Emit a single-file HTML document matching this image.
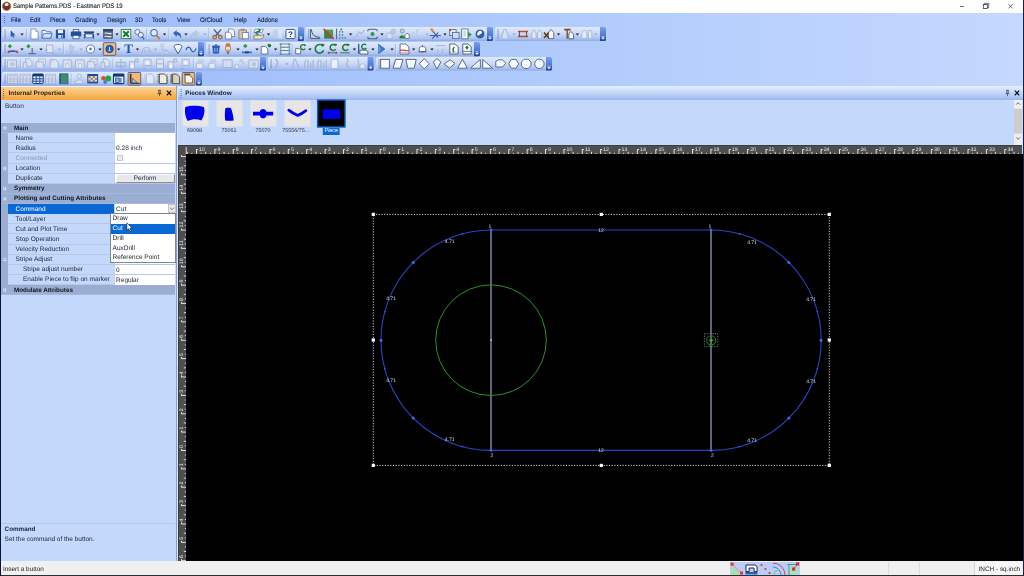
<!DOCTYPE html><html><head><meta charset="utf-8"><title>Sample Patterns.PDS - Eastman PDS 19</title><style>
*{margin:0;padding:0;box-sizing:border-box}
html,body{width:1024px;height:576px;overflow:hidden}
body{will-change:transform;-webkit-font-smoothing:antialiased;text-rendering:geometricPrecision}
body{position:relative;font-family:"Liberation Sans", sans-serif;font-size:6.5px;color:#1a1a2a;background:linear-gradient(90deg,#9dbbfa 0%,#a3c0fb 21%,#b2cdfc 60%,#c5d8fe 100%)}
.a{position:absolute}
.t{position:absolute;white-space:nowrap;line-height:10px;height:10px}
#title{left:0;top:0;width:1024px;height:13px;background:#fff}
#lb{left:0;top:0;width:1.3px;height:576px;background:#0b1338}
.menu span{position:absolute;top:15.9px;transform:scaleX(.93);transform-origin:0 0;font-size:6.6px;color:#1c2a4a;line-height:10px;-webkit-text-stroke:.15px #1c2a4a}
#lp{left:1px;top:86px;width:175px;height:475px;background:#c4d8fb}
#lph{left:1px;top:86px;width:174.5px;height:14px;background:linear-gradient(#fbd49a 0%,#f9bf6c 45%,#f6a440 100%);border-top:1px solid #e9eef9}
#pw{left:178px;top:86px;width:845px;height:60px;background:#c4d8fb}
#pwh{left:178px;top:86px;width:845px;height:13.5px;background:linear-gradient(#e6eefd 0%,#cddcfa 35%,#b0c8f5 75%,#9ab6ec 100%)}
.row{position:absolute;left:1px;width:174px;height:10.13px;border-bottom:.6px solid #b7c7e7}
.cat{background:#9aadd2;font-weight:bold;border-bottom:.6px solid #a6b8da}
.gut{position:absolute;left:0;top:-.3px;width:7.3px;height:10.8px;background:#9aadd2}
.lab{position:absolute;top:.55px;line-height:10px;font-size:6.5px;color:#20283c;white-space:nowrap}
.val{position:absolute;left:112.8px;top:0;width:61.2px;height:9.6px;background:#fff;line-height:11.1px;font-size:6.5px;padding-left:1.3px;color:#20283c;border-left:.6px solid #c8d2e6}
#status{left:1px;top:561px;width:1022px;height:14px;background:#f0f0f0}
#canvas{left:186px;top:154px;width:837px;height:407px;background:#000}
</style></head><body>
<div class="a" id="title"></div>
<svg class="a" style="left:2px;top:1px" width="10" height="11" viewBox="0 0 10 11"><circle cx="4.6" cy="5.2" r="4.3" fill="#6b3a28"/><circle cx="4.6" cy="5.2" r="4.3" fill="none" stroke="#b08a4a" stroke-width=".8"/><ellipse cx="4.6" cy="3.6" rx="2" ry="1.6" fill="#f3efe6"/><ellipse cx="4.6" cy="7" rx="1.8" ry="1.5" fill="#8a1f3c"/></svg>
<div class="t" style="left:13px;top:2.1px;font-size:6.55px;color:#222;-webkit-text-stroke:.12px #222;transform:scaleX(.915);transform-origin:0 0">Sample Patterns.PDS - Eastman PDS 19</div>
<svg class="a" style="left:950px;top:0" width="74" height="13" viewBox="0 0 74 13"><path d="M10 6.5h4" stroke="#333" stroke-width=".7"/><rect x="33.3" y="4.5" width="4" height="4" fill="none" stroke="#333" stroke-width=".8"/><path d="M34.6 4.500v-1.200h4.200v4.200h-1.400" fill="none" stroke="#333" stroke-width=".7"/><path d="M58.5 4.2l4.2 4.2m0-4.2l-4.2 4.2" stroke="#333" stroke-width=".7"/></svg>
<svg class="a" style="left:3px;top:15px" width="3" height="10" viewBox="0 0 3 10"><g fill="#4c64a0"><rect x="1" y="1" width="1" height="1"/><rect x="1" y="3" width="1" height="1"/><rect x="1" y="5" width="1" height="1"/><rect x="1" y="7" width="1" height="1"/></g></svg>
<div class="menu">
<span style="left:10.9px">File</span>
<span style="left:29.9px">Edit</span>
<span style="left:50.2px">Piece</span>
<span style="left:74.7px">Grading</span>
<span style="left:106.6px">Design</span>
<span style="left:135.4px">3D</span>
<span style="left:152.4px">Tools</span>
<span style="left:176.9px">View</span>
<span style="left:199.9px">O/Cloud</span>
<span style="left:233.9px">Help</span>
<span style="left:257.4px">Addons</span>
</div>
<svg class="a" style="left:0;top:26px" width="1024" height="60" viewBox="0 26 1024 60" font-family='"Liberation Sans", sans-serif'><defs><linearGradient id="tbg" x1="0" y1="0" x2="0" y2="1"><stop offset="0" stop-color="#e1eafc"/><stop offset=".45" stop-color="#cbdaf8"/><stop offset=".85" stop-color="#a9c0ee"/><stop offset="1" stop-color="#8ea8e0"/></linearGradient><linearGradient id="cap" x1="0" y1="0" x2="0" y2="1"><stop offset="0" stop-color="#7ba0ea"/><stop offset=".6" stop-color="#4c78d4"/><stop offset="1" stop-color="#1f3f94"/></linearGradient></defs><rect x="2" y="27" width="302" height="14" rx="1.500" fill="url(#tbg)"/><path d="M298 27h4.500a1.500 1.500 0 0 1 1.500 1.500v11a1.500 1.500 0 0 1-1.500 1.500h-4.500z" fill="url(#cap)"/><path d="M299.4 36.4h3M299.6 37.8h2.800l-1.400 1.500z" stroke="#f0f4fc" stroke-width=".6" fill="#f0f4fc"/><rect x="4.6" y="29.4" width="1" height="1" fill="#4c64a0"/><rect x="4.6" y="31.4" width="1" height="1" fill="#4c64a0"/><rect x="4.6" y="33.4" width="1" height="1" fill="#4c64a0"/><rect x="4.6" y="35.4" width="1" height="1" fill="#4c64a0"/><rect x="4.6" y="37.4" width="1" height="1" fill="#4c64a0"/><rect x="305.5" y="27" width="187.5" height="14" rx="1.500" fill="url(#tbg)"/><path d="M487 27h4.500a1.500 1.500 0 0 1 1.500 1.500v11a1.500 1.500 0 0 1-1.500 1.500h-4.500z" fill="url(#cap)"/><path d="M488.4 36.4h3M488.6 37.8h2.800l-1.400 1.500z" stroke="#f0f4fc" stroke-width=".6" fill="#f0f4fc"/><rect x="308.1" y="29.4" width="1" height="1" fill="#4c64a0"/><rect x="308.1" y="31.4" width="1" height="1" fill="#4c64a0"/><rect x="308.1" y="33.4" width="1" height="1" fill="#4c64a0"/><rect x="308.1" y="35.4" width="1" height="1" fill="#4c64a0"/><rect x="308.1" y="37.4" width="1" height="1" fill="#4c64a0"/><rect x="495" y="27" width="111" height="14" rx="1.500" fill="url(#tbg)"/><path d="M600 27h4.500a1.500 1.500 0 0 1 1.500 1.500v11a1.500 1.500 0 0 1-1.500 1.500h-4.500z" fill="url(#cap)"/><path d="M601.4 36.4h3M601.6 37.8h2.800l-1.400 1.500z" stroke="#f0f4fc" stroke-width=".6" fill="#f0f4fc"/><rect x="497.6" y="29.4" width="1" height="1" fill="#4c64a0"/><rect x="497.6" y="31.4" width="1" height="1" fill="#4c64a0"/><rect x="497.6" y="33.4" width="1" height="1" fill="#4c64a0"/><rect x="497.6" y="35.4" width="1" height="1" fill="#4c64a0"/><rect x="497.6" y="37.4" width="1" height="1" fill="#4c64a0"/><rect x="2" y="42" width="202" height="14.200000000000003" rx="1.500" fill="url(#tbg)"/><path d="M198 42h4.500a1.500 1.500 0 0 1 1.500 1.500v11.200000000000003a1.500 1.500 0 0 1-1.500 1.500h-4.500z" fill="url(#cap)"/><path d="M199.4 51.6h3M199.6 53.0h2.800l-1.400 1.500z" stroke="#f0f4fc" stroke-width=".6" fill="#f0f4fc"/><rect x="4.6" y="44.4" width="1" height="1" fill="#4c64a0"/><rect x="4.6" y="46.4" width="1" height="1" fill="#4c64a0"/><rect x="4.6" y="48.4" width="1" height="1" fill="#4c64a0"/><rect x="4.6" y="50.4" width="1" height="1" fill="#4c64a0"/><rect x="4.6" y="52.4" width="1" height="1" fill="#4c64a0"/><rect x="206" y="42" width="274" height="14.200000000000003" rx="1.500" fill="url(#tbg)"/><path d="M474 42h4.500a1.500 1.500 0 0 1 1.500 1.500v11.200000000000003a1.500 1.500 0 0 1-1.500 1.500h-4.500z" fill="url(#cap)"/><path d="M475.4 51.6h3M475.6 53.0h2.800l-1.400 1.500z" stroke="#f0f4fc" stroke-width=".6" fill="#f0f4fc"/><rect x="208.6" y="44.4" width="1" height="1" fill="#4c64a0"/><rect x="208.6" y="46.4" width="1" height="1" fill="#4c64a0"/><rect x="208.6" y="48.4" width="1" height="1" fill="#4c64a0"/><rect x="208.6" y="50.4" width="1" height="1" fill="#4c64a0"/><rect x="208.6" y="52.4" width="1" height="1" fill="#4c64a0"/><rect x="2" y="57" width="264" height="13.599999999999994" rx="1.500" fill="url(#tbg)"/><path d="M260 57h4.500a1.500 1.500 0 0 1 1.500 1.500v10.599999999999994a1.500 1.500 0 0 1-1.500 1.500h-4.500z" fill="url(#cap)"/><path d="M261.4 66.0h3M261.6 67.39999999999999h2.800l-1.400 1.500z" stroke="#f0f4fc" stroke-width=".6" fill="#f0f4fc"/><rect x="4.6" y="59.4" width="1" height="1" fill="#4c64a0"/><rect x="4.6" y="61.4" width="1" height="1" fill="#4c64a0"/><rect x="4.6" y="63.4" width="1" height="1" fill="#4c64a0"/><rect x="4.6" y="65.4" width="1" height="1" fill="#4c64a0"/><rect x="4.6" y="67.4" width="1" height="1" fill="#4c64a0"/><rect x="268" y="57" width="105.60000000000002" height="13.599999999999994" rx="1.500" fill="url(#tbg)"/><path d="M367.6 57h4.500a1.500 1.500 0 0 1 1.500 1.500v10.599999999999994a1.500 1.500 0 0 1-1.500 1.500h-4.500z" fill="url(#cap)"/><path d="M369.0 66.0h3M369.20000000000005 67.39999999999999h2.800l-1.400 1.500z" stroke="#f0f4fc" stroke-width=".6" fill="#f0f4fc"/><rect x="270.6" y="59.4" width="1" height="1" fill="#4c64a0"/><rect x="270.6" y="61.4" width="1" height="1" fill="#4c64a0"/><rect x="270.6" y="63.4" width="1" height="1" fill="#4c64a0"/><rect x="270.6" y="65.4" width="1" height="1" fill="#4c64a0"/><rect x="270.6" y="67.4" width="1" height="1" fill="#4c64a0"/><rect x="376" y="57" width="176" height="13.599999999999994" rx="1.500" fill="url(#tbg)"/><path d="M546 57h4.500a1.500 1.500 0 0 1 1.500 1.500v10.599999999999994a1.500 1.500 0 0 1-1.500 1.500h-4.500z" fill="url(#cap)"/><path d="M547.4 66.0h3M547.6 67.39999999999999h2.800l-1.400 1.500z" stroke="#f0f4fc" stroke-width=".6" fill="#f0f4fc"/><rect x="378.6" y="59.4" width="1" height="1" fill="#4c64a0"/><rect x="378.6" y="61.4" width="1" height="1" fill="#4c64a0"/><rect x="378.6" y="63.4" width="1" height="1" fill="#4c64a0"/><rect x="378.6" y="65.4" width="1" height="1" fill="#4c64a0"/><rect x="378.6" y="67.4" width="1" height="1" fill="#4c64a0"/><rect x="2" y="72" width="200" height="13.599999999999994" rx="1.500" fill="url(#tbg)"/><path d="M196 72h4.500a1.500 1.500 0 0 1 1.500 1.500v10.599999999999994a1.500 1.500 0 0 1-1.500 1.500h-4.500z" fill="url(#cap)"/><path d="M197.4 81.0h3M197.6 82.39999999999999h2.800l-1.400 1.500z" stroke="#f0f4fc" stroke-width=".6" fill="#f0f4fc"/><rect x="4.6" y="74.4" width="1" height="1" fill="#4c64a0"/><rect x="4.6" y="76.4" width="1" height="1" fill="#4c64a0"/><rect x="4.6" y="78.4" width="1" height="1" fill="#4c64a0"/><rect x="4.6" y="80.4" width="1" height="1" fill="#4c64a0"/><rect x="4.6" y="82.4" width="1" height="1" fill="#4c64a0"/><g transform="translate(12.0 34.0)"><g transform="translate(0.6 0) scale(0.78)"><path d="M-2.200-4.200L3.200 1.200 .8 1.300 2 4l-1.300.6-1.200-2.700-1.700 1.500z" fill="#2b5fd4" stroke="#1c3f9a" stroke-width=".4"/></g></g><path d="M20.3 33.5h3.400l-1.700 1.900z" fill="#161c30"/><path d="M26.5 28.5v11" stroke="#8aa2d4" stroke-width=".7"/><path d="M27.2 28.5v11" stroke="#eaf1fd" stroke-width=".6"/><g transform="translate(34.5 34.0)"><path d="M-3.600-5h4.800l2.400 2.400v7.600h-7.200z" fill="#fdfdff" stroke="#7184b0" stroke-width=".8"/><path d="M1.200-5v2.400h2.400" fill="#dfe6f6" stroke="#7184b0" stroke-width=".6"/></g><g transform="translate(47.0 34.0)"><path d="M-5-3.600h3.400l1.200 1.400h4.400v6.400h-9z" fill="#e9f0fd" stroke="#456cb8" stroke-width=".9"/><path d="M-5 4.200l1.800-4.600h8.400l-1.800 4.600z" fill="#cfdefa" stroke="#456cb8" stroke-width=".8"/></g><g transform="translate(60.5 34.0)"><rect x="-4.600" y="-4.600" width="9.200" height="9.200" rx=".8" fill="#1d4ea3"/><rect x="-2.600" y="-4.200" width="5.200" height="3.400" fill="#eef3fc"/><rect x="-2.400" y="1" width="4.800" height="3.200" fill="#c6d6f2"/><rect x=".6" y="1.500" width="1.200" height="2.200" fill="#1d4ea3"/></g><path d="M68.0 28.5v11" stroke="#8aa2d4" stroke-width=".7"/><path d="M68.7 28.5v11" stroke="#eaf1fd" stroke-width=".6"/><g transform="translate(76.0 34.0)"><rect x="-2.800" y="-4.400" width="5.600" height="2.400" fill="#f4f6fb" stroke="#1d4ea3" stroke-width=".7"/><rect x="-5.200" y="-2.400" width="10.400" height="4.800" rx="1" fill="#1d4ea3"/><rect x="-3" y="1.400" width="6" height="3.400" fill="#f4f6fb" stroke="#1d4ea3" stroke-width=".7"/></g><g transform="translate(89.0 34.0)"><path d="M-5-2h10l-1.200 2.400h-7.600z" fill="#3a5a96"/><rect x="-5" y="-2.600" width="10" height="1.500" fill="#27427c"/><path d="M-3.600 0h7.200v3.800h-7.200z" fill="#e4ebf8" stroke="#3a5a96" stroke-width=".7"/><path d="M-4.600 0v4.600M4.600 0v4.600" stroke="#27427c" stroke-width="1"/></g><path d="M96.3 33.5h3.400l-1.700 1.900z" fill="#161c30"/><g transform="translate(108.0 34.0)"><rect x="-5" y="-5" width="10" height="10" rx=".8" fill="#5a6a86"/><rect x="-5" y="-5" width="10" height="2.400" fill="#34466c"/><path d="M-3.400-.6c2-1.600 4.500 1.400 6.800-.2M-3.400 2.600c2-1.600 4.500 1.400 6.800-.2" stroke="#f0f3fa" stroke-width="1.100" fill="none"/></g><path d="M115.3 33.5h3.400l-1.700 1.900z" fill="#161c30"/><g transform="translate(126.0 34.0)"><rect x="-4.800" y="-4.600" width="9.600" height="9.200" fill="#f2f8f2" stroke="#2f7d44" stroke-width=".9"/><path d="M-2.800-2.800l5.600 5.600M2.800-2.800l-5.600 5.600" stroke="#17793a" stroke-width="2"/></g><g transform="translate(139.0 34.0)"><circle cx="-1.600" cy="-2" r="2.600" fill="#e8effc" stroke="#5a6f9e" stroke-width=".9"/><circle cx="1.800" cy="1" r="2.600" fill="#e8effc" stroke="#5a6f9e" stroke-width=".9"/><path d="M2.800 2.400l2.400 2.800" stroke="#3a66c0" stroke-width="1.400"/></g><path d="M146.7 28.5v11" stroke="#8aa2d4" stroke-width=".7"/><path d="M147.4 28.5v11" stroke="#eaf1fd" stroke-width=".6"/><g transform="translate(155.0 34.0)"><g transform="translate(0 0) scale(0.95)"><circle cx="-1" cy="-1.400" r="3.400" fill="#dcecff" stroke="#3c64b4" stroke-width="1.100"/><path d="M1.400 1.400l3.200 3.400" stroke="#c8783c" stroke-width="1.800" stroke-linecap="round"/></g></g><path d="M162.8 33.5h3.400l-1.700 1.900z" fill="#161c30"/><path d="M169.0 28.5v11" stroke="#8aa2d4" stroke-width=".7"/><path d="M169.7 28.5v11" stroke="#eaf1fd" stroke-width=".6"/><g transform="translate(177.0 34.0)"><g transform="translate(0 0.4) scale(0.85)"><path d="M-4.400-1.600l3.800-3v2c4 0 5.600 2.600 5 6.600-.8-2.600-2.200-3.800-5-3.600v2z" fill="#2f62c8" stroke="#204a9e" stroke-width=".4"/></g></g><path d="M184.3 33.5h3.400l-1.700 1.900z" fill="#161c30"/><g transform="translate(195.0 34.0)"><g transform="translate(0 0.4) scale(0.85)"><path d="M4.400-1.600l-3.800-3v2c-4 0-5.600 2.600-5 6.600.8-2.600 2.200-3.800 5-3.600v2z" fill="#bfcbe4" stroke="#9dadd0" stroke-width=".4"/></g></g><path d="M203.3 33.5h3.400l-1.700 1.900z" fill="#9aa8c8"/><path d="M209.0 28.5v11" stroke="#8aa2d4" stroke-width=".7"/><path d="M209.7 28.5v11" stroke="#eaf1fd" stroke-width=".6"/><g transform="translate(217.5 34.0)"><path d="M-3.600-4.600l5.400 6.400M3.600-4.600l-5.400 6.400" stroke="#4a5f94" stroke-width="1.400"/><circle cx="-2.800" cy="3.200" r="1.700" fill="none" stroke="#b06a30" stroke-width="1.300"/><circle cx="2.800" cy="3.200" r="1.700" fill="none" stroke="#b06a30" stroke-width="1.300"/></g><g transform="translate(230.0 34.0)"><path d="M-1.600-5h4.200l2 2v5.600h-6.200z" fill="#fdfdff" stroke="#5f74a6" stroke-width=".8"/><path d="M-4.600-1.800h4.200l2 2v4.800h-6.200z" fill="#fdfdff" stroke="#5f74a6" stroke-width=".8"/></g><g transform="translate(243.5 34.0)"><rect x="-4.600" y="-4.200" width="7.600" height="9" rx=".6" fill="#d8c8a8" stroke="#8a7650" stroke-width=".8"/><rect x="-2.600" y="-5.200" width="3.600" height="1.800" fill="#8890a4"/><rect x="-1.200" y="-1.400" width="6" height="6.200" fill="#fbfcff" stroke="#5f74a6" stroke-width=".8"/></g><path d="M251.0 28.5v11" stroke="#8aa2d4" stroke-width=".7"/><path d="M251.7 28.5v11" stroke="#eaf1fd" stroke-width=".6"/><g transform="translate(259.0 34.0)"><path d="M-3.600-4.800h8l-1.600 3.400h-8z" fill="#f4f6fb" stroke="#5f74a6" stroke-width=".7"/><path d="M-.8-4.400c2.400 0 2.400 2-.4 2.200s-2.400 2.400.6 2.400" stroke="#1f7a36" stroke-width="1.400" fill="none"/><path d="M-5 1.600h7.600l2-1.200v2.800l-3 1.800h-6.600z" fill="#f1e6d4" stroke="#7a6a54" stroke-width=".7"/></g><path d="M266.8 33.5h3.400l-1.700 1.900z" fill="#161c30"/><g transform="translate(277.5 34.0)"><rect x="-4" y="-4.600" width="4" height="9" fill="#bfcbe4" opacity=".8"/><rect x="1" y="-4.600" width="3.600" height="9" fill="#dde4f2" opacity=".8"/></g><g transform="translate(290.5 34.0)"><rect x="-4.600" y="-4.600" width="9.200" height="9.200" rx="1" fill="#f3f6fc" stroke="#3d5c9c" stroke-width="1"/><text x="0" y="2.900" font-size="8" font-weight="bold" text-anchor="middle" fill="#223a70">?</text></g><g transform="translate(315.0 34.0)"><path d="M-4.600-5v9.600h9.800" stroke="#50607e" stroke-width="1" fill="none"/><path d="M-3.600-4.600c.4 5 3 7.600 8.400 8" stroke="#2f6a4a" stroke-width="1" fill="none"/></g><g transform="translate(328.7 34.0)"><path d="M-4.400-4.400h8.800v8.800h-8.800z" fill="#4e9a52"/><path d="M-4.400-4.400l8.800 8.800h-8.800z" fill="#3c8044"/><path d="M-5.200-5.200l10.200 10.200" stroke="#c8382c" stroke-width="1.500"/></g><g transform="translate(341.0 34.0)"><path d="M-4.400-5.400v10.600" stroke="#50608a" stroke-width="1"/><g fill="#3f78a0"><rect x="-2" y="-2.800" width="1.400" height="1.400"/><rect x=".8" y="-2.800" width="1.400" height="1.400"/><rect x="-2" y=".2" width="1.400" height="1.400"/><rect x=".8" y=".2" width="1.400" height="1.400"/><rect x="-2" y="3.200" width="1.400" height="1.400"/><rect x=".8" y="3.200" width="1.400" height="1.400"/><rect x="3.400" y="3.200" width="1.400" height="1.400"/></g><rect x="-.6" y="-5.400" width="1.800" height="1.800" fill="#2e9a46"/></g><path d="M348.9 33.5h3.400l-1.700 1.900z" fill="#161c30"/><g transform="translate(360.0 34.0)"><path d="M-4 3l3-5 2.500 1.500 3-3.500" stroke="#9dadd0" stroke-width="1.200" fill="none" opacity=".8"/><path d="M-4 4.400h8.600" stroke="#bfcbe4" stroke-width="1"/></g><g transform="translate(372.5 34.0)"><path d="M-4.800-2.800c0-2 1-2 2-2h5.600c1 0 2 0 2 2M-4.800 2.800c0 2 1 2 2 2h5.600c1 0 2 0 2-2" stroke="#4c5e86" stroke-width="1.100" fill="none"/><circle cx="0" cy="0" r="2" fill="#2e9a46"/></g><path d="M380.3 33.5h3.400l-1.700 1.900z" fill="#161c30"/><g transform="translate(391.0 34.0)"><path d="M-4-1h5v5.600h-5z" fill="#d8e0f0" stroke="#9dadd0" stroke-width=".6"/><circle cx="2.400" cy="-2.400" r="2.400" fill="#bfcbe4" stroke="#9dadd0" stroke-width=".6"/></g><g transform="translate(404.0 34.0)"><circle cx="-1.800" cy="-3" r="2" fill="#c8d4e4" stroke="#6a7a98" stroke-width=".7"/><path d="M-4.800 4.600c0-4.400 6-4.400 6 0z" fill="#2e9a46"/><path d="M1 1.400l2-2.200 2.200 1.200v4.200h-4.200z" fill="#fafbfe" stroke="#4a5672" stroke-width=".7"/><circle cx="-2.600" cy="3" r="1.300" fill="#1f7a36"/></g><g transform="translate(415.6 34.0)"><path d="M-3.600 4.400v-4.400l2.400-1.600M.8 4.400v-7.600l2.800-1.400" stroke="#bfcbe4" stroke-width="1.300" fill="none"/></g><path d="M425.3 33.5h3.400l-1.700 1.900z" fill="#9aa8c8"/><g transform="translate(435.0 34.0)"><path d="M-5.400 1.600h11.200" stroke="#3c5ca4" stroke-width="1"/><path d="M-3.600-5l6.400 8.600M3.200-1.400l-6 6" stroke="#3c5ca4" stroke-width="1.100"/><path d="M-4-5.400l2.600 3.400" stroke="#d08a4a" stroke-width="2.200"/></g><path d="M443.3 33.5h3.400l-1.700 1.900z" fill="#161c30"/><g transform="translate(454.5 34.0)"><rect x="-4.800" y="-4.400" width="6.400" height="6" fill="#dfe7f6" stroke="#50658e" stroke-width=".8"/><rect x="-2" y="-1.600" width="6.600" height="6.200" fill="#cfdcf4" stroke="#50658e" stroke-width=".8"/><rect x="-5.400" y="-5" width="2" height="2" fill="#c04838"/></g><g transform="translate(466.5 34.0)"><rect x="-4.800" y="-5" width="6.400" height="9.800" fill="#f6f8fd" stroke="#50658e" stroke-width=".8"/><rect x="-3.200" y="-3.200" width="2.600" height="6" fill="#cfd9ee"/><path d="M1.200-2.600l4.200 3-4.200 3z" fill="#2e9a46"/></g><g transform="translate(480.0 34.0)"><g transform="translate(0 0) scale(0.82)"><circle cx="0" cy="0" r="4.900" fill="#2c5cae"/><circle cx="0" cy="0" r="4.900" fill="none" stroke="#1b3f86" stroke-width=".7"/><path d="M-3.200-1.400c1-2.600 4-3.200 5.400-1.600 1 1.600-.6 2.800-1.800 3.400s-1.600 2-3 1.400-.9-2-.6-3.200z" fill="#f2f6fc"/></g></g><g transform="translate(505.0 34.0)"><path d="M-3.600 4l2.400-8.400h2.400l2.400 8.400" stroke="#9dadd0" stroke-width="1" fill="#dfe5f2" opacity=".85"/><path d="M-5 4.400h10" stroke="#bfcbe4" stroke-width=".8"/></g><path d="M512.3 33.5h3.400l-1.700 1.900z" fill="#9aa8c8"/><g transform="translate(523.0 34.0)"><path d="M-5-2.600h10M-5 2.600h10" stroke="#b4502c" stroke-width="1.500"/><path d="M-3.600-2.600v5.200M3.600-2.600v5.200" stroke="#6a3a2a" stroke-width=".9"/></g><g transform="translate(537.0 34.0)"><path d="M-5 4.400v-5.400l2-3.400 2 3.400v5.400zM.6 4.400v-5.400l2-3.400 2 3.400v5.400z" fill="#e2e8f4" stroke="#9dadd0" stroke-width=".7"/></g><g transform="translate(549.0 34.0)"><path d="M-.6 4.600v-6l2.600-3.200 2.800 3.200v6z" fill="#f4f6fb" stroke="#4a5672" stroke-width=".8"/><path d="M-5-1.600l4.800 5.600M-.2-1.600l-4.800 5.600" stroke="#6a3418" stroke-width="1.500"/></g><path d="M556.8 33.5h3.400l-1.700 1.900z" fill="#161c30"/><g transform="translate(569.0 34.0)"><path d="M-4.800-4.400h6.400" stroke="#8a4a20" stroke-width="1.800"/><path d="M-1.800-4v8.800" stroke="#8a4a20" stroke-width="1.400"/><path d="M-.2 4.800v-5l2-2.400 2.800 3v4.400z" fill="#f6f8fc" stroke="#3a4a6a" stroke-width=".8"/></g><path d="M575.7 33.5h3.400l-1.700 1.900z" fill="#161c30"/><g transform="translate(587.0 34.0)"><path d="M-5.200 4.400v-4.400c0-5 5-5 5 0v4.400zM1.400 4.400v-7.800h3.400v7.800z" fill="#e2e8f4" stroke="#9dadd0" stroke-width=".7"/></g><path d="M593.9 33.5h3.400l-1.700 1.900z" fill="#9aa8c8"/><g transform="translate(12.5 49.0)"><g transform="translate(0 -.9)"><path d="M-4.600 3.200h9.600" stroke="#c83838" stroke-width="1.300"/><path d="M-2.400 3.200h5" stroke="#2f58c0" stroke-width="1.500"/></g><path d="M-4.800-2.800l2.200-2.200 2.200 2.200-2.200 2.200z" fill="#2e9a46"/><circle cx="-4" cy="3.200" r="1" fill="#c83838"/><circle cx="4.600" cy="3.200" r="1" fill="#c83838"/></g><path d="M20.3 48.5h3.400l-1.700 1.900z" fill="#161c30"/><g transform="translate(31.0 49.0)"><path d="M-4.800-2.800l2.200-2.200 2.200 2.200-2.200 2.200z" fill="#2e9a46"/><path d="M1.200-1v5.400M-2.400 4.600h7.200" stroke="#5a6c98" stroke-width="1.200"/></g><path d="M39.3 48.5h3.400l-1.700 1.900z" fill="#161c30"/><g transform="translate(50.0 49.0)"><rect x="-3.600" y="-4" width="6.400" height="7.600" fill="#dfe5f2" stroke="#9dadd0" stroke-width=".8"/><path d="M-5 1h3M1 4.400h4" stroke="#9dadd0" stroke-width=".9"/></g><path d="M57.8 48.5h3.400l-1.700 1.900z" fill="#9aa8c8"/><path d="M63.5 43.5v11" stroke="#8aa2d4" stroke-width=".7"/><path d="M64.2 43.5v11" stroke="#eaf1fd" stroke-width=".6"/><g transform="translate(72.0 49.0)"><path d="M-2.600-4.400l4.600 2.200-3 7z" fill="#bfcbe4" stroke="#9dadd0" stroke-width=".5"/></g><path d="M79.3 48.5h3.400l-1.700 1.900z" fill="#9aa8c8"/><g transform="translate(90.5 49.0)"><g transform="translate(0 0) scale(0.85)"><circle cx="0" cy="0" r="4.800" fill="#f4f8ff" stroke="#5e7cc0" stroke-width="1.100"/><circle cx="0" cy="0" r="1.500" fill="#3a6ccc"/></g></g><path d="M98.3 48.5h3.400l-1.700 1.900z" fill="#161c30"/><rect x="103.2" y="42.7" width="12.6" height="12.6" rx=".8" fill="#f9b86a" stroke="#3a5aa0" stroke-width=".9"/><g transform="translate(109.5 49.0)"><g transform="translate(0 0) scale(0.84)"><circle cx="0" cy="0" r="4.400" fill="#1e63c8" stroke="#0f3f94" stroke-width=".9"/><path d="M0-2.400v4.400" stroke="#d8e8ff" stroke-width="1.100"/><path d="M-1.600 1.400a1.900 1.900 0 0 0 3.200 0" stroke="#d8e8ff" stroke-width=".7" fill="none"/></g></g><path d="M117.0 48.5h3.400l-1.700 1.900z" fill="#161c30"/><g transform="translate(128.5 49.0)"><text x="0" y="4.300" font-family="Liberation Serif,serif" font-size="13" font-weight="bold" text-anchor="middle" fill="#1f56b4">T</text></g><path d="M135.8 48.5h3.400l-1.700 1.900z" fill="#161c30"/><g transform="translate(146.5 49.0)"><path d="M-4.400 3.600c.6-4.400 1.600-5 4.400-5s3.800.6 4.400 5M-2 3.600v-3M2 3.600v-3" stroke="#9dadd0" stroke-width=".9" fill="none" opacity=".9"/></g><path d="M153.9 48.5h3.400l-1.700 1.900z" fill="#9aa8c8"/><g transform="translate(164.5 49.0)"><rect x="-3.600" y="-5" width="2.600" height="2.600" fill="#e2e8f4" stroke="#9dadd0" stroke-width=".6"/><path d="M-2.400-2.400v3.600h4.400v2.400" stroke="#9dadd0" stroke-width=".8" fill="none"/><rect x=".6" y="2.200" width="2.800" height="2.600" fill="#e2e8f4" stroke="#9dadd0" stroke-width=".6"/></g><g transform="translate(178.0 49.0)"><path d="M-4.200-2.600c1.200-2.600 7.200-2.600 8.400 0l-4.200 7.400z" fill="#f2f6fe" stroke="#46639c" stroke-width="1"/></g><g transform="translate(191.0 49.0)"><path d="M-5.200 1c1.600-3.800 3.800-3.800 5.200-.4s3.600 3.400 5.200-1.200" stroke="#2c5cae" stroke-width="1.200" fill="none"/></g><g transform="translate(216.0 49.0)"><g transform="translate(0 0) scale(0.86)"><path d="M-3.800-2.600h7.600l-.8 7.400h-6z" fill="#2f62c0" stroke="#1c4496" stroke-width=".7"/><rect x="-4.600" y="-4.200" width="9.200" height="1.700" rx=".5" fill="#2456b0"/><rect x="-1.400" y="-5.300" width="2.800" height="1.200" fill="#2456b0"/><path d="M-1.400-1v4.400M1.400-1v4.400" stroke="#bcd2f8" stroke-width=".9"/></g></g><g transform="translate(228.0 49.0)"><path d="M-1.600-5.200h3.200l1 5.400-2.600 5-2.600-5z" fill="#f0e2c8" stroke="#8a5a30" stroke-width=".7"/><path d="M-1.600-5.200h3.200l.6 3h-4.400z" fill="#c8782c"/><path d="M0 .4v4" stroke="#4a3a2a" stroke-width=".8"/></g><path d="M236.3 48.5h3.400l-1.700 1.900z" fill="#161c30"/><g transform="translate(247.0 49.0)"><path d="M-4-3l2.300-2.300 2.300 2.300-2.300 2.300z" fill="#2e9a46"/><path d="M-5 3.400h10" stroke="#3a66c0" stroke-width="1.500"/><path d="M-2 3.400h4" stroke="#20407e" stroke-width="1.900"/></g><path d="M255.3 48.5h3.400l-1.700 1.900z" fill="#161c30"/><g transform="translate(266.0 49.0)"><path d="M-4.800-2.600h4l2.600 2.600v5h-6.600z" fill="#fcfdff" stroke="#4a5878" stroke-width=".8"/><path d="M1-4.200l2.200-1.400 2 2.200-2.200 1.800z" fill="#2e9a46"/><circle cx="3.600" cy="-3.400" r="1.600" fill="#1f7a36"/></g><path d="M273.9 48.5h3.400l-1.700 1.900z" fill="#161c30"/><g transform="translate(285.0 49.0)"><rect x="-4.200" y="-5" width="8.400" height="10" fill="#e6f0f4" stroke="#4a7a8c" stroke-width=".8"/><path d="M-4.200-1.800h8.400M-4.200 1.600h8.400" stroke="#4a7a8c" stroke-width="1"/><path d="M-5.400-5h2M3.400-5h2M-5.400 5h2M3.400 5h2" stroke="#4a7a8c" stroke-width="1"/></g><path d="M292.3 43.5v11" stroke="#8aa2d4" stroke-width=".7"/><path d="M293.0 43.5v11" stroke="#eaf1fd" stroke-width=".6"/><g transform="translate(300.5 49.0)"><path d="M-4.800-.4h3.400l1.600 1.600v3.600h-5z" fill="#fcfdff" stroke="#4a5878" stroke-width=".8"/><path d="M4.600-3.400a2.500 2.500 0 1 0 0 3" stroke="#1f7a36" stroke-width="1.400" fill="none"/><path d="M3.400-5l2.400 1-1.600 1.600z" fill="#1f7a36"/></g><path d="M308.3 48.5h3.400l-1.700 1.900z" fill="#161c30"/><g transform="translate(319.0 49.0)"><path d="M3.600-3.200a4.300 4.300 0 1 0 1 4.400" stroke="#1f7a36" stroke-width="1.600" fill="none"/><path d="M1.800-5.600l4 .8-2 3z" fill="#1f7a36"/></g><g transform="translate(332.5 49.0)"><path d="M2.800-3.600a3 3 0 1 0 .4 3.800" stroke="#1f7a36" stroke-width="1.500" fill="none"/><path d="M1.600-5.600l3.200.8-1.600 2.400z" fill="#1f7a36"/><path d="M-4.400 3.800h8.800" stroke="#5a6c98" stroke-width="1"/><circle cx="-3.800" cy="3.800" r="1.100" fill="#d8303c"/><circle cx="3.800" cy="3.800" r="1.100" fill="#d8303c"/></g><g transform="translate(345.0 49.0)"><path d="M2.800-3.600a3 3 0 1 0 .4 3.800" stroke="#1f7a36" stroke-width="1.500" fill="none"/><path d="M1.600-5.600l3.200.8-1.600 2.400z" fill="#1f7a36"/><path d="M-4.800 3.800h9.600" stroke="#4c8c70" stroke-width="1.300"/></g><path d="M352.7 48.5h3.400l-1.700 1.900z" fill="#161c30"/><g transform="translate(363.5 49.0)"><path d="M-4.800-5.200v10" stroke="#2c5cae" stroke-width="1.300"/><path d="M2.600-4a2.500 2.500 0 1 0 .2 3" stroke="#1f7a36" stroke-width="1.400" fill="none"/><path d="M-3.600 1.200h6l2 1.400v2.400h-8z" fill="#fcfdff" stroke="#3a4a6a" stroke-width=".8"/></g><path d="M371.3 48.5h3.400l-1.700 1.900z" fill="#161c30"/><g transform="translate(381.5 49.0)"><path d="M-3-4.800v9.600l6.400-4.800z" fill="#3a74d0" stroke="#2458b0" stroke-width=".6"/><path d="M-3-4.800v9.600l2.600-4.800z" fill="#6a9ae4"/></g><path d="M390.3 48.5h3.400l-1.700 1.900z" fill="#161c30"/><path d="M395.6 43.5v11" stroke="#8aa2d4" stroke-width=".7"/><path d="M396.3 43.5v11" stroke="#eaf1fd" stroke-width=".6"/><g transform="translate(404.5 49.0)"><path d="M-4.400-5h5.800l3 3v7h-8.800z" fill="#fcfdff" stroke="#4a5878" stroke-width=".8"/><path d="M-4.400 1.400c3-1.200 5.800 1.200 8.800 0" stroke="#d43a30" stroke-width="1.100" fill="none"/><path d="M-4.400 3.600h8.800" stroke="#e89088" stroke-width=".7"/></g><path d="M411.9 48.5h3.400l-1.700 1.900z" fill="#161c30"/><g transform="translate(422.5 49.0)"><g transform="translate(0 0) scale(0.8)"><path d="M-4 3.400v-4.400c0-1.200 1.400-2 4-2s4 .8 4 2v4.400z" fill="#fcfdff" stroke="#3a4a6a" stroke-width=".9"/><path d="M0-5.400v2.600M-5 3.400h10M0 3.400v1.600" stroke="#3a4a6a" stroke-width=".8"/></g></g><path d="M430.3 48.5h3.400l-1.700 1.900z" fill="#161c30"/><g transform="translate(441.0 49.0)"><path d="M-5-3.400h9.600M-3 0l-1 4M2-0l-1 4" stroke="#9dadd0" stroke-width="1" opacity=".8"/></g><g transform="translate(454.0 49.0)"><path d="M-4.200-5h5.400l3 3v7h-8.400z" fill="#fcfdff" stroke="#4a5878" stroke-width=".9"/><path d="M.4-1.800c-2 1.400-1.600 3.600-.4 5" stroke="#1f7a36" stroke-width="1.500" fill="none"/><path d="M-4.200 3.200h8.400" stroke="#8a96b4" stroke-width=".6"/></g><g transform="translate(467.0 49.0)"><path d="M-4.200-5h5.400l3 3v7h-8.400z" fill="#fcfdff" stroke="#4a5878" stroke-width=".9"/><path d="M0-3.400l1.800 2-1.800 2.200-1.800-2.200z" fill="#1f7a36"/><path d="M-4.200 2.400h8.400" stroke="#4a5878" stroke-width=".8"/></g><g transform="translate(12.0 63.8)"><rect x="-4.600" y="-3.800" width="9.200" height="8" fill="#d6deef" stroke="#9dadd0" stroke-width=".8"/><circle cx=".4" cy=".4" r="1.800" fill="#bfcbe4" stroke="#9dadd0" stroke-width=".5"/></g><path d="M20.5 58.3v11" stroke="#8aa2d4" stroke-width=".7"/><path d="M21.2 58.3v11" stroke="#eaf1fd" stroke-width=".6"/><g transform="translate(28.0 63.8)"><path d="M-2.600-5h4l2.600 2.600v4.800h-6.600z" fill="#dbe3f2" stroke="#9dadd0" stroke-width=".8"/><path d="M-4.600-1.400h3.600v6h-3.600z" fill="#d3dcee" stroke="#9dadd0" stroke-width=".7"/></g><g transform="translate(41.0 63.8)"><rect x="-2.400" y="-4.800" width="7" height="5.600" fill="#dde4f2" stroke="#9dadd0" stroke-width=".7"/><rect x="-4.800" y="-2" width="7" height="6.400" fill="#dbe3f2" stroke="#9dadd0" stroke-width=".8"/></g><g transform="translate(54.0 63.8)"><path d="M-4-4.400h5.600l2.800 2.800v6h-8.400z" fill="#dbe3f2" stroke="#9dadd0" stroke-width=".8"/><path d="M-1-4.400l-2.800 3.600" stroke="#9dadd0" stroke-width=".7"/></g><g transform="translate(67.5 63.8)"><rect x="-4.400" y="-4" width="8.600" height="8.400" fill="#d8e0f0" stroke="#9dadd0" stroke-width=".8"/><rect x="-1.600" y="0" width="3" height="4.400" fill="#e6ebf6" stroke="#9dadd0" stroke-width=".5"/><rect x="1" y="-5" width="3.400" height="2.400" fill="#bfcbe4"/></g><g transform="translate(80.0 63.8)"><rect x="-4.400" y="-4" width="8.600" height="8.400" fill="#d8e0f0" stroke="#9dadd0" stroke-width=".8"/><rect x="-1.600" y="0" width="3" height="4.400" fill="#e6ebf6" stroke="#9dadd0" stroke-width=".5"/><rect x="1" y="-5" width="3.400" height="2.400" fill="#bfcbe4"/></g><g transform="translate(92.5 63.8)"><rect x="-2.400" y="-4.800" width="7" height="5.600" fill="#dde4f2" stroke="#9dadd0" stroke-width=".7"/><rect x="-4.800" y="-2" width="7" height="6.400" fill="#dbe3f2" stroke="#9dadd0" stroke-width=".8"/></g><g transform="translate(105.6 63.8)"><path d="M-2.600-5h4l2.600 2.600v4.800h-6.600z" fill="#dbe3f2" stroke="#9dadd0" stroke-width=".8"/><path d="M-4.600-1.400h3.600v6h-3.600z" fill="#d3dcee" stroke="#9dadd0" stroke-width=".7"/></g><path d="M113.0 58.3v11" stroke="#8aa2d4" stroke-width=".7"/><path d="M113.7 58.3v11" stroke="#eaf1fd" stroke-width=".6"/><g transform="translate(121.0 63.8)"><path d="M0-5v10M-4.400-1.400h8.800v4h-8.800z" fill="none" stroke="#9dadd0" stroke-width=".9"/></g><g transform="translate(134.0 63.8)"><rect x="-4.400" y="-2" width="5" height="6.400" fill="#dbe3f2" stroke="#9dadd0" stroke-width=".8"/><rect x="1" y="-5" width="3.600" height="3.600" fill="#bfcbe4" stroke="#9dadd0" stroke-width=".5"/><rect x="-2.600" y="1" width="2" height="3.400" fill="#f8f9fc"/></g><g transform="translate(147.5 63.8)"><rect x="-3.600" y="-4.600" width="7.200" height="6.400" fill="#d8e0f0" stroke="#9dadd0" stroke-width=".8"/><rect x="-1.400" y="-2.400" width="2.600" height="2.600" fill="#f4f6fb"/><path d="M-5 4.600h3.400" stroke="#9dadd0" stroke-width="1"/></g><g transform="translate(160.0 63.8)"><rect x="-3.600" y="-4.800" width="7.200" height="9.600" fill="#dbe3f2" stroke="#9dadd0" stroke-width=".8"/><path d="M-3.600 0h7.200" stroke="#9dadd0" stroke-width=".9"/></g><g transform="translate(172.5 63.8)"><rect x="-4.400" y="-2" width="5" height="6.400" fill="#dbe3f2" stroke="#9dadd0" stroke-width=".8"/><rect x="1" y="-5" width="3.600" height="3.600" fill="#bfcbe4" stroke="#9dadd0" stroke-width=".5"/><rect x="-2.600" y="1" width="2" height="3.400" fill="#f8f9fc"/></g><g transform="translate(185.6 63.8)"><rect x="-3.600" y="-4.600" width="7.200" height="6.400" fill="#d8e0f0" stroke="#9dadd0" stroke-width=".8"/><rect x="-1.400" y="-2.400" width="2.600" height="2.600" fill="#f4f6fb"/><path d="M-5 4.600h3.400" stroke="#9dadd0" stroke-width="1"/></g><path d="M193.6 58.3v11" stroke="#8aa2d4" stroke-width=".7"/><path d="M194.3 58.3v11" stroke="#eaf1fd" stroke-width=".6"/><g transform="translate(200.5 63.8)"><path d="M-4-.6l4.800 0 1.400 1.600v3.600h-6.200z" fill="#e4e9f5" stroke="#9dadd0" stroke-width=".7"/><rect x="-3" y="-4.600" width="6.400" height="4" fill="#bfcbe4" opacity=".8"/></g><g transform="translate(213.0 63.8)"><path d="M-4-.6l4.800 0 1.400 1.600v3.600h-6.200z" fill="#e4e9f5" stroke="#9dadd0" stroke-width=".7"/><rect x="-3" y="-4.600" width="6.400" height="4" fill="#bfcbe4" opacity=".8"/></g><g transform="translate(227.5 63.8)"><rect x="-4.600" y="-4" width="9.200" height="7.600" fill="#d3dcee" stroke="#9dadd0" stroke-width=".9"/></g><g transform="translate(240.0 63.8)"><rect x="-4.800" y="1" width="3.400" height="3.400" fill="#e6ebf6" stroke="#9dadd0" stroke-width=".6"/><rect x="-.6" y="-4.800" width="3.400" height="3.400" fill="#bfcbe4"/><rect x="1.800" y="-1.800" width="3" height="3" fill="#bfcbe4"/></g><g transform="translate(253.5 63.8)"><rect x="-4.600" y="-3.800" width="9.200" height="8" fill="#d6deef" stroke="#9dadd0" stroke-width=".8"/><circle cx=".4" cy=".4" r="1.800" fill="#bfcbe4" stroke="#9dadd0" stroke-width=".5"/></g><g transform="translate(277.5 63.8)"><path d="M-2-4.600c2.600.6 2.600 5 0 8.600" stroke="#9dadd0" stroke-width="1.500" fill="none" opacity=".85"/></g><path d="M285.3 63.3h3.400l-1.700 1.900z" fill="#9aa8c8"/><g transform="translate(296.0 63.8)"><path d="M-3.600 4.600l1.600-9h1.400l3.800 9" stroke="#9dadd0" stroke-width="1.100" fill="none" opacity=".85"/></g><g transform="translate(309.0 63.8)"><path d="M-4.400 4v-5l1.600-3M-1 4v-8M1.600 4v-5.400M4.200 4v-8" stroke="#9dadd0" stroke-width="1.200" fill="none" opacity=".8"/></g><g transform="translate(322.0 63.8)"><path d="M-4.400 4v-5l1.600-3M-1 4v-8M1.600 4v-5.400M4.200 4v-8" stroke="#9dadd0" stroke-width="1.200" fill="none" opacity=".8"/></g><g transform="translate(334.5 63.8)"><rect x="-3.400" y="-4.800" width="6.800" height="9.400" rx=".6" fill="#eceff8" stroke="#9dadd0" stroke-width=".8"/></g><g transform="translate(347.5 63.8)"><path d="M-1-4.800c3 1 1 3.400-.4 4.800l2.800 4" stroke="#9dadd0" stroke-width="1.200" fill="none" opacity=".8"/></g><g transform="translate(361.0 63.8)"><path d="M-3-5l1 9.400" stroke="#9dadd0" stroke-width="1.200" opacity=".8"/><path d="M-1 4.400v-3l2.400-1.600 2.600 1.600v3z" fill="#e6ebf6" stroke="#9dadd0" stroke-width=".7"/></g><g transform="translate(385.0 63.8)"><rect x="-4.400" y="-4.400" width="8.800" height="8.800" fill="#f8fbff" stroke="#58698e" stroke-width="1"/></g><g transform="translate(398.0 63.8)"><path d="M-2.400-4.400h7.400l-2.600 8.800h-7.400z" fill="#f8fbff" stroke="#58698e" stroke-width="1"/></g><g transform="translate(411.0 63.8)"><path d="M-5.200-4.400h10.400l-2 8.800h-6.400z" fill="#f8fbff" stroke="#58698e" stroke-width="1"/></g><g transform="translate(424.3 63.8)"><path d="M0-5.200l5 5.200-5 5.200-5-5.200z" fill="#f8fbff" stroke="#58698e" stroke-width="1"/></g><g transform="translate(437.0 63.8)"><path d="M0-5.200l3.800 3.400-3.800 7-3.800-7z" fill="#f8fbff" stroke="#58698e" stroke-width="1"/></g><g transform="translate(449.5 63.8)"><path d="M-5.400.2l6-4.200 4.800 3.600-5.400 4.600z" fill="#f8fbff" stroke="#58698e" stroke-width="1"/></g><g transform="translate(462.5 63.8)"><path d="M0-4.600l4.800 9h-9.600z" fill="#f8fbff" stroke="#58698e" stroke-width="1"/></g><g transform="translate(475.5 63.8)"><path d="M4.800-4.400v8.800h-9.800z" fill="#f8fbff" stroke="#58698e" stroke-width="1"/></g><g transform="translate(487.5 63.8)"><path d="M-4.800-4.400v8.800h9.800z" fill="#f8fbff" stroke="#58698e" stroke-width="1"/></g><g transform="translate(500.6 63.8)"><path d="M-4.800-2.400l3-1.600h3.600l3.400 3.400-3.400 3.800h-6.600z" fill="#f8fbff" stroke="#58698e" stroke-width="1"/></g><g transform="translate(513.7 63.8)"><path d="M-2.400-4.400h4.800l2.600 4.400-2.600 4.400h-4.800l-2.600-4.400z" fill="#f8fbff" stroke="#58698e" stroke-width="1"/></g><g transform="translate(526.2 63.8)"><path d="M-2-4.600h4l2.800 2.800v3.600l-2.800 2.800h-4l-2.800-2.800v-3.600z" fill="#f8fbff" stroke="#58698e" stroke-width="1"/></g><g transform="translate(539.4 63.8)"><circle cx="0" cy="0" r="4.700" fill="#f8fbff" stroke="#58698e" stroke-width="1"/></g><g transform="translate(12.5 78.8)"><rect x="-5" y="-4.600" width="10" height="9.200" fill="#d8e0f0" stroke="#9dadd0" stroke-width=".8"/><rect x="-5" y="-4.600" width="10" height="2.200" fill="#bfcbe4"/><path d="M-1.800-2.400v7M1.600-2.400v7M-5 .2h10M-5 2.400h10" stroke="#9dadd0" stroke-width=".7"/></g><g transform="translate(25.0 78.8)"><rect x="-5" y="-4.600" width="10" height="9.200" fill="#d8e0f0" stroke="#9dadd0" stroke-width=".8"/><rect x="-5" y="-4.600" width="10" height="2.200" fill="#bfcbe4"/><path d="M-1.800-2.400v7M1.600-2.400v7M-5 .2h10M-5 2.400h10" stroke="#9dadd0" stroke-width=".7"/></g><g transform="translate(38.0 78.8)"><rect x="-5.200" y="-4.800" width="10.400" height="9.600" rx=".8" fill="#dfeefc" stroke="#143a7c" stroke-width="1"/><rect x="-5.200" y="-4.800" width="10.400" height="2.400" fill="#15356e"/><path d="M-1.800-2.400v7.200M1.800-2.400v7.200M-5.200 0h10.400M-5.200 2.400h10.400" stroke="#1d4ea3" stroke-width="1"/></g><g transform="translate(50.6 78.8)"><rect x="-5" y="-4.600" width="10" height="9.200" fill="#d8e0f0" stroke="#9dadd0" stroke-width=".8"/><rect x="-5" y="-4.600" width="10" height="2.200" fill="#bfcbe4"/><path d="M-1.800-2.400v7M1.600-2.400v7M-5 .2h10M-5 2.400h10" stroke="#9dadd0" stroke-width=".7"/></g><g transform="translate(64.0 78.8)"><rect x="-4" y="-5" width="8" height="10" fill="#3f8a74" stroke="#3a5f8c" stroke-width=".8"/><rect x="-2.400" y="-3.400" width="4.200" height="3" fill="#2f9a46"/><path d="M-4-5v10" stroke="#2c4a7c" stroke-width="1.300"/></g><path d="M71.3 73.3v11" stroke="#8aa2d4" stroke-width=".7"/><path d="M72.0 73.3v11" stroke="#eaf1fd" stroke-width=".6"/><g transform="translate(79.3 78.8)"><circle cx="0" cy="-2.600" r="2.200" fill="#d8e0f0" stroke="#9dadd0" stroke-width=".7"/><path d="M-3.800 4.800c0-5 7.600-5 7.600 0z" fill="#d8e0f0" stroke="#9dadd0" stroke-width=".7"/></g><g transform="translate(92.7 78.8)"><rect x="-5.400" y="-4.800" width="10.800" height="9.400" fill="#1f4a9a"/><rect x="-4.400" y="-2.800" width="8.800" height="5.600" fill="#e8dcc0"/><g fill="#8a8270"><rect x="-4.400" y="-2.800" width="2.200" height="1.900"/><rect x="0" y="-2.800" width="2.200" height="1.900"/><rect x="-2.200" y="-.9" width="2.200" height="1.900"/><rect x="2.200" y="-.9" width="2.200" height="1.900"/><rect x="-4.400" y="1" width="2.200" height="1.800"/><rect x="0" y="1" width="2.200" height="1.800"/></g></g><g transform="translate(106.0 78.8)"><circle cx="-2.600" cy="-.6" r="2.200" fill="#e0483c"/><circle cx="2.200" cy="-.4" r="3" fill="#2aa23e"/><circle cx="-.8" cy="3.200" r="1.900" fill="#3a7ee0"/></g><g transform="translate(118.7 78.8)"><rect x="-5.200" y="-4.800" width="10.400" height="9.600" rx=".8" fill="#e8f2fc" stroke="#143a7c" stroke-width="1.100"/><rect x="-5.200" y="-4.800" width="10.400" height="2.600" fill="#15356e"/><rect x="-3.200" y="-.8" width="3.800" height="4.400" fill="#7aa8e8" stroke="#1d4ea3" stroke-width=".7"/><path d="M2.200-1v5" stroke="#1d4ea3" stroke-width="1"/></g><rect x="128.1" y="72.5" width="12.6" height="12.6" rx=".8" fill="#f9b86a" stroke="#3a5aa0" stroke-width=".9"/><g transform="translate(134.4 78.8)"><path d="M-3.800-5v9.600" stroke="#3a3428" stroke-width="1.700"/><path d="M-3.800 4.600h9" stroke="#3a3428" stroke-width="1.100"/><path d="M-2.200 4v-4.600l5.400 4.600z" fill="#a8c8f0" stroke="#3a5a9a" stroke-width=".8"/></g><g transform="translate(150.0 78.8)"><path d="M-3.600-4.800h5l2.400 2.400v7.200h-7.400z" fill="#e2e8f4" stroke="#9dadd0" stroke-width=".7"/><path d="M-5-4.400v9" stroke="#bfcbe4" stroke-width="1.600"/></g><g transform="translate(163.0 78.8)"><path d="M-3.600-4.800h5l2.600 2.600v7h-7.600z" fill="#f0ece0" stroke="#4a4638" stroke-width=".9"/><path d="M-4.800-4.800v9.600" stroke="#6a5a3a" stroke-width="1.300" stroke-dasharray="1.200 1"/><path d="M4.200-4.600v9" stroke="#6a5a3a" stroke-width=".8" stroke-dasharray="1 1"/></g><g transform="translate(175.6 78.8)"><path d="M-3-4.800h4l3 3v6.600h-7z" fill="#d8d2be" stroke="#4a4638" stroke-width=".9"/><path d="M-4.400-4.800v9.600" stroke="#5a5240" stroke-width="1.100"/></g><rect x="182.2" y="72.5" width="12.6" height="12.6" rx=".8" fill="#f9b86a" stroke="#3a5aa0" stroke-width=".9"/><g transform="translate(188.5 78.8)"><path d="M-3.400-3.800h4.400l3.200 3.200v4.800h-7.600z" fill="#fafafc" stroke="#5a5240" stroke-width=".9"/><path d="M-4.400-4.600h6" stroke="#3a3428" stroke-width="1"/></g></svg>
<div class="a" id="lp"></div><div class="a" id="lph"></div>
<div class="a" style="left:175.5px;top:86px;width:2.5px;height:475px;background:#d6e3fa;border-left:.8px solid #8ea0c4"></div>
<div class="t" style="left:8.6px;top:89.4px;font-size:6.4px;font-weight:bold;color:#2c2218">Internal Properties</div>
<svg class="a" style="left:1px;top:86px" width="176" height="14" viewBox="0 0 176 14"><g fill="#7d6a4a"><rect x="2" y="3" width="1" height="1"/><rect x="2" y="5" width="1" height="1"/><rect x="2" y="7" width="1" height="1"/><rect x="2" y="9" width="1" height="1"/><rect x="2" y="11" width="1" height="1"/></g><path d="M157.2 4.3h2.6M157.8 4.3v3.2M159.2 4.3v3.2M156.6 7.6h3.8M158.5 7.6v2.6" stroke="#3a2c1c" stroke-width=".7" fill="none"/><path d="M165.8 4.6l4.4 4.6m0-4.6l-4.4 4.6" stroke="#1c1208" stroke-width="1.25"/></svg>
<div class="t" style="left:5px;top:102.1px;font-size:6.5px;color:#2a3248">Button</div>
<div class="row cat" style="top:123.00px"><span class="lab" style="left:13px;font-weight:bold;font-size:6.3px;color:#10141e">Main</span></div>
<svg class="a" style="left:0;top:0;pointer-events:none" width="10" height="300" viewBox="0 0 10 300"><rect x="3" y="126.70" width="3.6" height=".9" fill="#e8eef8"/><rect x="3" y="128.50" width="3.6" height=".9" fill="#e8eef8"/></svg>
<div class="row" style="top:133.13px"><div class="gut"></div><span class="lab" style="left:14.6px;color:#20283c">Name</span><div class="val"></div></div>
<div class="row" style="top:143.26px"><div class="gut"></div><span class="lab" style="left:14.6px;color:#20283c">Radius</span><div class="val">0.28 inch</div></div>
<div class="row" style="top:153.39px"><div class="gut"></div><span class="lab" style="left:14.6px;color:#8a96ac">Connected</span><div class="val"><span class="a" style="left:2.6px;top:1.8px;width:5.4px;height:5.4px;background:#e9ecf2;border:.6px solid #c3c9d6"></span></div></div>
<div class="row" style="top:163.52px"><div class="gut"></div><span class="lab" style="left:14.6px;color:#20283c">Location</span><div class="val"></div></div>
<svg class="a" style="left:0;top:0;pointer-events:none" width="10" height="300" viewBox="0 0 10 300"><rect x="3.4" y="166.72" width=".9" height="3.6" fill="#e8eef8"/><rect x="5.2" y="166.72" width=".9" height="3.6" fill="#e8eef8"/></svg>
<div class="row" style="top:173.65px"><div class="gut"></div><span class="lab" style="left:14.6px;color:#20283c">Duplicate</span><div class="val"><span class="a" style="left:.8px;top:.3px;width:59px;height:9.2px;background:#e9e9ea;border:.6px solid #fafafa;border-right:1px solid #8e8e90;border-bottom:1px solid #8e8e90;text-align:center;line-height:8.6px;font-size:6.4px">Perform</span></div></div>
<div class="row cat" style="top:183.78px"><span class="lab" style="left:13px;font-weight:bold;font-size:6.3px;color:#10141e">Symmetry</span></div>
<svg class="a" style="left:0;top:0;pointer-events:none" width="10" height="300" viewBox="0 0 10 300"><rect x="3.4" y="186.98" width=".9" height="3.6" fill="#e8eef8"/><rect x="5.2" y="186.98" width=".9" height="3.6" fill="#e8eef8"/></svg>
<div class="row cat" style="top:193.91px"><span class="lab" style="left:13px;font-weight:bold;font-size:6.3px;color:#10141e">Plotting and Cutting Attributes</span></div>
<svg class="a" style="left:0;top:0;pointer-events:none" width="10" height="300" viewBox="0 0 10 300"><rect x="3" y="197.61" width="3.6" height=".9" fill="#e8eef8"/><rect x="3" y="199.41" width="3.6" height=".9" fill="#e8eef8"/></svg>
<div class="row" style="top:204.04px"><div class="gut"></div><div class="a" style="left:7.3px;top:0;width:105.6px;height:9.6px;background:#0a68d6"></div><span class="lab" style="left:14.6px;color:#fff">Command</span><div class="val">Cut<span class="a" style="left:52.8px;top:.3px;width:8.2px;height:9px;background:#e9e9e9;border:.5px solid #c4c4c4"></span><svg class="a" style="left:52.8px;top:.3px" width="8.2" height="9" viewBox="0 0 8.2 9"><path d="M2 3.600l2.100 2.100 2.100-2.100" fill="none" stroke="#555" stroke-width=".8"/></svg></div></div>
<div class="row" style="top:214.17px"><div class="gut"></div><span class="lab" style="left:14.6px;color:#20283c">Tool/Layer</span><div class="val"></div></div>
<div class="row" style="top:224.30px"><div class="gut"></div><span class="lab" style="left:14.6px;color:#20283c">Cut and Plot Time</span><div class="val"></div></div>
<div class="row" style="top:234.43px"><div class="gut"></div><span class="lab" style="left:14.6px;color:#20283c">Stop Operation</span><div class="val"></div></div>
<div class="row" style="top:244.56px"><div class="gut"></div><span class="lab" style="left:14.6px;color:#20283c">Velocity Reduction</span><div class="val"></div></div>
<div class="row" style="top:254.69px"><div class="gut"></div><span class="lab" style="left:14.6px;color:#20283c">Stripe Adjust</span><div class="val"></div></div>
<svg class="a" style="left:0;top:0;pointer-events:none" width="10" height="300" viewBox="0 0 10 300"><rect x="3" y="258.39" width="3.6" height=".9" fill="#e8eef8"/><rect x="3" y="260.19" width="3.6" height=".9" fill="#e8eef8"/></svg>
<div class="row" style="top:264.82px"><div class="gut"></div><span class="lab" style="left:22px;color:#20283c">Stripe adjust number</span><div class="val">0</div></div>
<div class="row" style="top:274.95px"><div class="gut"></div><span class="lab" style="left:22px;color:#20283c">Enable Piece to flip on marker</span><div class="val">Regular</div></div>
<div class="row cat" style="top:285.08px"><span class="lab" style="left:13px;font-weight:bold;font-size:6.3px;color:#10141e">Modulate Attributes</span></div>
<svg class="a" style="left:0;top:0;pointer-events:none" width="10" height="300" viewBox="0 0 10 300"><rect x="3.4" y="288.28" width=".9" height="3.6" fill="#e8eef8"/><rect x="5.2" y="288.28" width=".9" height="3.6" fill="#e8eef8"/></svg>
<div class="a" style="left:110.2px;top:213.3px;width:65.4px;height:49.3px;background:#fff;border:.7px solid #7f8797;font-size:6.5px;color:#1a1f2c">
<div class="a" style="left:0;top:0.2px;width:64px;height:9.6px;padding-left:1.4px;line-height:10.8px">Draw</div>
<div class="a" style="left:0;top:9.9px;width:64px;height:9.6px;background:#0a68d6;color:#fff;padding-left:1.4px;line-height:10.8px">Cut</div>
<div class="a" style="left:0;top:19.6px;width:64px;height:9.6px;padding-left:1.4px;line-height:10.8px">Drill</div>
<div class="a" style="left:0;top:29.3px;width:64px;height:9.6px;padding-left:1.4px;line-height:10.8px">AuxDrill</div>
<div class="a" style="left:0;top:39.0px;width:64px;height:9.6px;padding-left:1.4px;line-height:10.8px">Reference Point</div>
</div>
<svg class="a" style="left:125.7px;top:221.6px" width="7.65" height="11.05" viewBox="0 0 9 13"><path d="M1 .8v9l2.1-1.9 1.5 3.4 1.5-.7-1.5-3.3h2.9z" fill="#fff" stroke="#111" stroke-width=".7"/></svg>
<div class="a" style="left:1px;top:522.6px;width:174px;height:.7px;background:#b6c7e6"></div>
<div class="t" style="left:4.6px;top:524.6px;font-weight:bold;font-size:6.3px;color:#1c2234">Command</div>
<div class="t" style="left:4.6px;top:534.8px;font-size:6.45px;color:#20283c">Set the command of the button.</div>
<div class="a" id="pw"></div><div class="a" id="pwh"></div>
<div class="t" style="left:185.2px;top:89.2px;font-size:6.4px;font-weight:bold;color:#15203a">Pieces Window</div>
<svg class="a" style="left:178px;top:86px" width="846" height="60" viewBox="0 0 846 60"><g fill="#5b6f98"><rect x="2.6" y="3" width="1" height="1"/><rect x="2.6" y="5" width="1" height="1"/><rect x="2.6" y="7" width="1" height="1"/><rect x="2.6" y="9" width="1" height="1"/><rect x="2.6" y="11" width="1" height="1"/></g><path d="M828.2 4.3h2.6M828.8 4.3v3.2M830.2 4.3v3.2M827.6 7.6h3.8M829.5 7.6v2.6" stroke="#2c3850" stroke-width=".7" fill="none"/><path d="M836.8 4.6l4.4 4.6m0-4.6l-4.4 4.6" stroke="#10141e" stroke-width="1.25"/><rect x="836" y="14" width="8.2" height="45" fill="#f0f0f0"/><rect x="836" y="22.700" width="8.2" height="25" fill="#cdcdcd"/><path d="M838.2 18.600l1.900-1.900 1.900 1.900M838.200 51.400l1.900 1.900 1.900-1.900" fill="none" stroke="#444" stroke-width=".8"/><rect x="4.5" y="14.5" width="26" height="26" fill="#e7e5e5"/><rect x="38.5" y="14.5" width="26" height="26" fill="#e7e5e5"/><rect x="72.5" y="14.5" width="26" height="26" fill="#e7e5e5"/><rect x="106.5" y="14.5" width="26" height="26" fill="#e7e5e5"/><rect x="139.6" y="14" width="27.4" height="27" fill="#000" stroke="#0a5fc8" stroke-width="1.4"/><path d="M7.400 21c4.400-1.800 13.400-1.600 18.400 0c1.500 3.800 0.300 9.200-2.400 13.400c-4.600-1.600-9.400-1.400-13.600 0.600c-2.400-4-3.600-9.600-2.400-14z" fill="#0000f0"/><path d="M47.4 22.200c1.500-0.600 4-0.600 5.400-0.100c1.600 3.200 2.600 8.400 2.900 12.300c-2.500 0.500-6.400 0.500-8.500 0c-0.500-3.800-0.500-8.500 0.200-12.200z" fill="#0000f0"/><path d="M75 25.800h6.800c0.600-3.600 6-3.600 6.600 0h6.800v3.600h-6.800c-0.600 3.800-6 3.800-6.600 0h-6.800z" fill="#0000f0"/><path d="M110.800 24.200q5.600 4 8.900 5.200q3.600-1.200 8.200-4.800" fill="none" stroke="#0000f0" stroke-width="2.700" stroke-linecap="round" stroke-linejoin="round"/><rect x="144.600" y="23.400" width="17.600" height="9.400" fill="#0000f0"/><rect x="144.800" y="42" width="16.800" height="7" fill="#0a68d6"/></svg>
<div class="t" style="left:174.5px;width:40px;text-align:center;top:126.4px;font-size:5.4px;color:#2a3046">69098</div>
<div class="t" style="left:209px;width:40px;text-align:center;top:126.4px;font-size:5.4px;color:#2a3046">75061</div>
<div class="t" style="left:243px;width:40px;text-align:center;top:126.4px;font-size:5.4px;color:#2a3046">75070</div>
<div class="t" style="left:275.8px;width:40px;text-align:center;top:126.4px;font-size:5.4px;color:#2a3046">75556/75...</div>
<div class="t" style="left:311.3px;width:40px;text-align:center;top:126.4px;font-size:5.4px;color:#fff">Piece</div>
<svg class="a" style="left:178px;top:145px" width="844" height="416" viewBox="178 145 844 416" font-family='"Liberation Sans", sans-serif' font-size="5.200" fill="#ececec"><rect x="178" y="145" width="844" height="9.200" fill="#4e4e4e"/><rect x="178" y="145" width="8" height="416" fill="#4e4e4e"/><rect x="178" y="145" width="844" height=".7" fill="#33373f"/><rect x="178" y="145" width=".7" height="416" fill="#33373f"/><text x="199.1" y="151.300">10</text><text x="217.5" y="151.300">9</text><text x="235.8" y="151.300">8</text><text x="254.2" y="151.300">7</text><text x="272.6" y="151.300">6</text><text x="290.9" y="151.300">5</text><text x="309.3" y="151.300">4</text><text x="327.7" y="151.300">3</text><text x="346.1" y="151.300">2</text><text x="364.4" y="151.300">1</text><text x="382.8" y="151.300">0</text><text x="401.2" y="151.300">1</text><text x="419.5" y="151.300">2</text><text x="437.9" y="151.300">3</text><text x="456.3" y="151.300">4</text><text x="474.7" y="151.300">5</text><text x="493.0" y="151.300">6</text><text x="511.4" y="151.300">7</text><text x="529.8" y="151.300">8</text><text x="548.1" y="151.300">9</text><text x="566.5" y="151.300">10</text><text x="584.9" y="151.300">11</text><text x="603.2" y="151.300">12</text><text x="621.6" y="151.300">13</text><text x="640.0" y="151.300">14</text><text x="658.4" y="151.300">15</text><text x="676.7" y="151.300">16</text><text x="695.1" y="151.300">17</text><text x="713.5" y="151.300">18</text><text x="731.8" y="151.300">19</text><text x="750.2" y="151.300">20</text><text x="768.6" y="151.300">21</text><text x="786.9" y="151.300">22</text><text x="805.3" y="151.300">23</text><text x="823.7" y="151.300">24</text><text x="842.1" y="151.300">25</text><text x="860.4" y="151.300">26</text><text x="878.8" y="151.300">27</text><text x="897.2" y="151.300">28</text><text x="915.5" y="151.300">29</text><text x="933.9" y="151.300">30</text><text x="952.3" y="151.300">31</text><text x="970.6" y="151.300">32</text><text x="989.0" y="151.300">33</text><text x="1007.4" y="151.300">34</text><text transform="translate(182.900 558.1) rotate(-90)">6</text><text transform="translate(182.900 539.8) rotate(-90)">5</text><text transform="translate(182.900 521.4) rotate(-90)">4</text><text transform="translate(182.900 503.0) rotate(-90)">3</text><text transform="translate(182.900 484.6) rotate(-90)">2</text><text transform="translate(182.900 466.3) rotate(-90)">1</text><text transform="translate(182.900 447.9) rotate(-90)">0</text><text transform="translate(182.900 429.5) rotate(-90)">1</text><text transform="translate(182.900 411.2) rotate(-90)">2</text><text transform="translate(182.900 392.8) rotate(-90)">3</text><text transform="translate(182.900 374.4) rotate(-90)">4</text><text transform="translate(182.900 356.0) rotate(-90)">5</text><text transform="translate(182.900 337.7) rotate(-90)">6</text><text transform="translate(182.900 319.3) rotate(-90)">7</text><text transform="translate(182.900 300.9) rotate(-90)">8</text><text transform="translate(182.900 282.6) rotate(-90)">9</text><text transform="translate(182.900 264.2) rotate(-90)">10</text><text transform="translate(182.900 245.8) rotate(-90)">11</text><text transform="translate(182.900 227.5) rotate(-90)">12</text><text transform="translate(182.900 209.1) rotate(-90)">13</text><text transform="translate(182.900 190.7) rotate(-90)">14</text><text transform="translate(182.900 172.3) rotate(-90)">15</text><path d="M186.200 147v7M187.3 151.8v2.4M191.9 152.9v1.3M196.5 149.200v5h.01M196.5 149.500h1.600M201.1 152.9v1.3M205.7 151.8v2.4M210.3 152.9v1.3M214.9 149.200v5h.01M214.9 149.500h1.600M219.5 152.9v1.3M224.1 151.8v2.4M228.6 152.9v1.3M233.2 149.200v5h.01M233.2 149.500h1.600M237.8 152.9v1.3M242.4 151.8v2.4M247.0 152.9v1.3M251.6 149.200v5h.01M251.6 149.500h1.600M256.2 152.9v1.3M260.8 151.8v2.4M265.4 152.9v1.3M270.0 149.200v5h.01M270.0 149.500h1.600M274.6 152.9v1.3M279.2 151.8v2.4M283.8 152.9v1.3M288.3 149.200v5h.01M288.3 149.500h1.600M292.9 152.9v1.3M297.5 151.8v2.4M302.1 152.9v1.3M306.7 149.200v5h.01M306.7 149.500h1.600M311.3 152.9v1.3M315.9 151.8v2.4M320.5 152.9v1.3M325.1 149.200v5h.01M325.1 149.500h1.600M329.7 152.9v1.3M334.3 151.8v2.4M338.9 152.9v1.3M343.5 149.200v5h.01M343.5 149.500h1.600M348.1 152.9v1.3M352.6 151.8v2.4M357.2 152.9v1.3M361.8 149.200v5h.01M361.8 149.500h1.600M366.4 152.9v1.3M371.0 151.8v2.4M375.6 152.9v1.3M380.2 149.200v5h.01M380.2 149.500h1.600M384.8 152.9v1.3M389.4 151.8v2.4M394.0 152.9v1.3M398.6 149.200v5h.01M398.6 149.500h1.600M403.2 152.9v1.3M407.8 151.8v2.4M412.3 152.9v1.3M416.9 149.200v5h.01M416.9 149.500h1.600M421.5 152.9v1.3M426.1 151.8v2.4M430.7 152.9v1.3M435.3 149.200v5h.01M435.3 149.500h1.600M439.9 152.9v1.3M444.5 151.8v2.4M449.1 152.9v1.3M453.7 149.200v5h.01M453.7 149.500h1.600M458.3 152.9v1.3M462.9 151.8v2.4M467.5 152.9v1.3M472.1 149.200v5h.01M472.1 149.500h1.600M476.6 152.9v1.3M481.2 151.8v2.4M485.8 152.9v1.3M490.4 149.200v5h.01M490.4 149.500h1.600M495.0 152.9v1.3M499.6 151.8v2.4M504.2 152.9v1.3M508.8 149.200v5h.01M508.8 149.500h1.600M513.4 152.9v1.3M518.0 151.8v2.4M522.6 152.9v1.3M527.2 149.200v5h.01M527.2 149.500h1.600M531.8 152.9v1.3M536.3 151.8v2.4M540.9 152.9v1.3M545.5 149.200v5h.01M545.5 149.500h1.600M550.1 152.9v1.3M554.7 151.8v2.4M559.3 152.9v1.3M563.9 149.200v5h.01M563.9 149.500h1.600M568.5 152.9v1.3M573.1 151.8v2.4M577.7 152.9v1.3M582.3 149.200v5h.01M582.3 149.500h1.600M586.9 152.9v1.3M591.5 151.8v2.4M596.0 152.9v1.3M600.6 149.200v5h.01M600.6 149.500h1.600M605.2 152.9v1.3M609.8 151.8v2.4M614.4 152.9v1.3M619.0 149.200v5h.01M619.0 149.500h1.600M623.6 152.9v1.3M628.2 151.8v2.4M632.8 152.9v1.3M637.4 149.200v5h.01M637.4 149.500h1.600M642.0 152.9v1.3M646.6 151.8v2.4M651.2 152.9v1.3M655.8 149.200v5h.01M655.8 149.500h1.600M660.3 152.9v1.3M664.9 151.8v2.4M669.5 152.9v1.3M674.1 149.200v5h.01M674.1 149.500h1.600M678.7 152.9v1.3M683.3 151.8v2.4M687.9 152.9v1.3M692.5 149.200v5h.01M692.5 149.500h1.600M697.1 152.9v1.3M701.7 151.8v2.4M706.3 152.9v1.3M710.9 149.200v5h.01M710.9 149.500h1.600M715.5 152.9v1.3M720.0 151.8v2.4M724.6 152.9v1.3M729.2 149.200v5h.01M729.2 149.500h1.600M733.8 152.9v1.3M738.4 151.8v2.4M743.0 152.9v1.3M747.6 149.200v5h.01M747.6 149.500h1.600M752.2 152.9v1.3M756.8 151.8v2.4M761.4 152.9v1.3M766.0 149.200v5h.01M766.0 149.500h1.600M770.6 152.9v1.3M775.2 151.8v2.4M779.7 152.9v1.3M784.3 149.200v5h.01M784.3 149.500h1.600M788.9 152.9v1.3M793.5 151.8v2.4M798.1 152.9v1.3M802.7 149.200v5h.01M802.7 149.500h1.600M807.3 152.9v1.3M811.9 151.8v2.4M816.5 152.9v1.3M821.1 149.200v5h.01M821.1 149.500h1.600M825.7 152.9v1.3M830.3 151.8v2.4M834.9 152.9v1.3M839.5 149.200v5h.01M839.5 149.500h1.600M844.0 152.9v1.3M848.6 151.8v2.4M853.2 152.9v1.3M857.8 149.200v5h.01M857.8 149.500h1.600M862.4 152.9v1.3M867.0 151.8v2.4M871.6 152.9v1.3M876.2 149.200v5h.01M876.2 149.500h1.600M880.8 152.9v1.3M885.4 151.8v2.4M890.0 152.9v1.3M894.6 149.200v5h.01M894.6 149.500h1.600M899.2 152.9v1.3M903.7 151.8v2.4M908.3 152.9v1.3M912.9 149.200v5h.01M912.9 149.500h1.600M917.5 152.9v1.3M922.1 151.8v2.4M926.7 152.9v1.3M931.3 149.200v5h.01M931.3 149.500h1.600M935.9 152.9v1.3M940.5 151.8v2.4M945.1 152.9v1.3M949.7 149.200v5h.01M949.7 149.500h1.600M954.3 152.9v1.3M958.9 151.8v2.4M963.4 152.9v1.3M968.0 149.200v5h.01M968.0 149.500h1.600M972.6 152.9v1.3M977.2 151.8v2.4M981.8 152.9v1.3M986.4 149.200v5h.01M986.4 149.500h1.600M991.0 152.9v1.3M995.6 151.8v2.4M1000.2 152.9v1.3M1004.8 149.200v5h.01M1004.8 149.500h1.600M1009.4 152.9v1.3M1014.0 151.8v2.4M1018.6 152.9v1.3M181.200 560.7h5M181.500 560.7v-1.600M184.9 556.1h1.3M183.8 551.5h2.4M184.9 546.9h1.3M181.200 542.4h5M181.500 542.4v-1.600M184.9 537.8h1.3M183.8 533.2h2.4M184.9 528.6h1.3M181.200 524.0h5M181.500 524.0v-1.600M184.9 519.4h1.3M183.8 514.8h2.4M184.9 510.2h1.3M181.200 505.6h5M181.500 505.6v-1.600M184.9 501.0h1.3M183.8 496.4h2.4M184.9 491.8h1.3M181.200 487.2h5M181.500 487.2v-1.600M184.9 482.6h1.3M183.8 478.1h2.4M184.9 473.5h1.3M181.200 468.9h5M181.500 468.9v-1.600M184.9 464.3h1.3M183.8 459.7h2.4M184.9 455.1h1.3M181.200 450.5h5M181.500 450.5v-1.600M184.9 445.9h1.3M183.8 441.3h2.4M184.9 436.7h1.3M181.200 432.1h5M181.500 432.1v-1.600M184.9 427.5h1.3M183.8 422.9h2.4M184.9 418.4h1.3M181.200 413.8h5M181.500 413.8v-1.600M184.9 409.2h1.3M183.8 404.6h2.4M184.9 400.0h1.3M181.200 395.4h5M181.500 395.4v-1.600M184.9 390.8h1.3M183.8 386.2h2.4M184.9 381.6h1.3M181.200 377.0h5M181.500 377.0v-1.600M184.9 372.4h1.3M183.8 367.8h2.4M184.9 363.2h1.3M181.200 358.6h5M181.500 358.6v-1.600M184.9 354.1h1.3M183.8 349.5h2.4M184.9 344.9h1.3M181.200 340.3h5M181.500 340.3v-1.600M184.9 335.7h1.3M183.8 331.1h2.4M184.9 326.5h1.3M181.200 321.9h5M181.500 321.9v-1.600M184.9 317.3h1.3M183.8 312.7h2.4M184.9 308.1h1.3M181.200 303.5h5M181.500 303.5v-1.600M184.9 298.9h1.3M183.8 294.4h2.4M184.9 289.8h1.3M181.200 285.2h5M181.500 285.2v-1.600M184.9 280.6h1.3M183.8 276.0h2.4M184.9 271.4h1.3M181.200 266.8h5M181.500 266.8v-1.600M184.9 262.2h1.3M183.8 257.6h2.4M184.9 253.0h1.3M181.200 248.4h5M181.500 248.4v-1.600M184.9 243.8h1.3M183.8 239.2h2.4M184.9 234.7h1.3M181.200 230.1h5M181.500 230.1v-1.600M184.9 225.5h1.3M183.8 220.9h2.4M184.9 216.3h1.3M181.200 211.7h5M181.500 211.7v-1.600M184.9 207.1h1.3M183.8 202.5h2.4M184.9 197.9h1.3M181.200 193.3h5M181.500 193.3v-1.600M184.9 188.7h1.3M183.8 184.1h2.4M184.9 179.5h1.3M181.200 174.9h5M181.500 174.9v-1.600M184.9 170.4h1.3M183.8 165.8h2.4M184.9 161.2h1.3M181.200 156.6h5M181.500 156.6v-1.600" stroke="#f0f0f0" stroke-width=".9" fill="none"/></svg>
<div class="a" id="canvas"></div>
<svg class="a" style="left:186px;top:154px" width="836" height="407" viewBox="186 154 836 407" font-family='"Liberation Sans", sans-serif'><rect x="373.3" y="214.4" width="456" height="251" fill="none" stroke="#e8e8e8" stroke-width=".9" stroke-dasharray="1.2 1.5"/><rect x="371.7" y="212.8" width="3.2" height="3.200" fill="#fff"/><rect x="599.6999999999999" y="212.8" width="3.2" height="3.200" fill="#fff"/><rect x="827.6999999999999" y="212.8" width="3.2" height="3.200" fill="#fff"/><rect x="371.7" y="338.4" width="3.2" height="3.200" fill="#fff"/><rect x="827.6999999999999" y="338.4" width="3.2" height="3.200" fill="#fff"/><rect x="371.7" y="463.79999999999995" width="3.2" height="3.200" fill="#fff"/><rect x="599.6999999999999" y="463.79999999999995" width="3.2" height="3.200" fill="#fff"/><rect x="827.6999999999999" y="463.79999999999995" width="3.2" height="3.200" fill="#fff"/><path d="M491 230H711A110 110 0 0 1 711 450.400H491A110 110.200 0 0 1 491 230Z" fill="none" stroke="#2c44c4" stroke-width="1.100"/><path d="M491 230V450.400M711 230V450.400" stroke="#aeb6d8" stroke-width="1.100"/><circle cx="491" cy="340.200" r="55.300" fill="none" stroke="#2f8f2f" stroke-width="1"/><circle cx="491" cy="340.200" r=".9" fill="#c8c8d8"/><circle cx="413.2" cy="262.4" r="1.5" fill="#3c6cf0"/><circle cx="413.2" cy="418.0" r="1.5" fill="#3c6cf0"/><circle cx="384.7" cy="311.7" r="0.8" fill="#3c6cf0"/><circle cx="384.7" cy="368.7" r="0.8" fill="#3c6cf0"/><circle cx="462.5" cy="233.9" r="0.8" fill="#3c6cf0"/><circle cx="462.5" cy="446.5" r="0.8" fill="#3c6cf0"/><circle cx="788.8" cy="262.4" r="1.5" fill="#3c6cf0"/><circle cx="788.8" cy="418.0" r="1.5" fill="#3c6cf0"/><circle cx="817.3" cy="311.7" r="0.8" fill="#3c6cf0"/><circle cx="817.3" cy="368.7" r="0.8" fill="#3c6cf0"/><circle cx="739.5" cy="233.9" r="0.8" fill="#3c6cf0"/><circle cx="739.5" cy="446.5" r="0.8" fill="#3c6cf0"/><circle cx="381.0" cy="340.2" r="1.5" fill="#3c6cf0"/><circle cx="821.0" cy="340.2" r="1.5" fill="#3c6cf0"/><circle cx="491.0" cy="230.0" r="1.4" fill="#3c6cf0"/><circle cx="711.0" cy="230.0" r="1.4" fill="#3c6cf0"/><circle cx="491.0" cy="450.4" r="1.4" fill="#3c6cf0"/><circle cx="711.0" cy="450.4" r="1.4" fill="#3c6cf0"/><rect x="704.400" y="333.700" width="13.400" height="12.900" fill="none" stroke="#8c8c8c" stroke-width=".8" stroke-dasharray="1.3 1.300"/><circle cx="711.200" cy="340.300" r="4.600" fill="none" stroke="#1f7f1f" stroke-width="1.100"/><path d="M708.800 340.300h4.800M711.200 339v2.600" stroke="#28c828" stroke-width="1.100"/><text x="449.6" y="242.6" font-size="5" fill="#e0e0e0" text-anchor="middle">4.71</text><text x="391" y="300.3" font-size="5" fill="#e0e0e0" text-anchor="middle">4.71</text><text x="391" y="382.3" font-size="5" fill="#e0e0e0" text-anchor="middle">4.71</text><text x="449.6" y="441.2" font-size="5" fill="#e0e0e0" text-anchor="middle">4.71</text><text x="752" y="243.5" font-size="5" fill="#e0e0e0" text-anchor="middle">4.71</text><text x="811" y="300.5" font-size="5" fill="#e0e0e0" text-anchor="middle">4.71</text><text x="811" y="382.5" font-size="5" fill="#e0e0e0" text-anchor="middle">4.71</text><text x="752" y="441.5" font-size="5" fill="#e0e0e0" text-anchor="middle">4.71</text><text x="601" y="231.9" font-size="5" fill="#e0e0e0" text-anchor="middle">12</text><text x="601" y="452.3" font-size="5" fill="#e0e0e0" text-anchor="middle">12</text><text x="490" y="227.5" font-size="5" fill="#e0e0e0" text-anchor="middle">1</text><text x="710" y="227.5" font-size="5" fill="#e0e0e0" text-anchor="middle">1</text><text x="492" y="456.6" font-size="5" fill="#e0e0e0" text-anchor="middle">2</text><text x="712.5" y="456.6" font-size="5" fill="#e0e0e0" text-anchor="middle">2</text></svg>
<div class="a" style="left:1023px;top:0;width:1px;height:576px;background:#182048"></div>
<div class="a" id="status"></div>
<div class="t" style="left:3px;top:564.5px;font-size:6.4px;color:#1a1a1a">Insert a button</div>
<div class="a" style="left:974px;top:562px;width:48px;height:13px;background:#f7f7f7;border-left:.6px solid #d4d4d4"></div>
<div class="a" style="left:888px;top:562px;width:.6px;height:13px;background:#dcdcdc"></div><div class="a" style="left:919px;top:562px;width:.6px;height:13px;background:#dcdcdc"></div>
<div class="t" style="left:978.6px;top:564.5px;font-size:6.4px;color:#1a1a1a">INCH - sq.inch</div>
<svg class="a" style="left:730px;top:561px" width="71" height="14" viewBox="0 0 71 14"><rect x="0" y="1" width="70" height="13" fill="#b9cdf6"/><path d="M1 14V5a9 9 0 0 1 9 9z" fill="#a8e0b0"/><path d="M1.500 2.500l11 11" stroke="#e8a0b0" stroke-width="1.200"/><rect x=".6" y="1.600" width="3" height="3" fill="#e03048"/><rect x="10" y="10.500" width="3" height="3" fill="#e03048"/><path d="M16 4h9.500l1.600 2v4.500h-3v-3.500h-5v3.500h-3.100z" fill="#fff" stroke="#101828" stroke-width=".9"/><rect x="15.400" y="11" width="12" height="2.400" fill="#2060c0"/><circle cx="31.500" cy="4" r="1.100" fill="#e03048"/><circle cx="35.500" cy="8" r="1.100" fill="#e03048"/><circle cx="39.500" cy="12" r="1.100" fill="#e03048"/><path d="M43 2a12 12 0 0 1 12 12" fill="none" stroke="#e04060" stroke-width="1"/><path d="M43 6a8 8 0 0 1 8 8" fill="none" stroke="#5080e0" stroke-width="1"/><path d="M44 14a5 5 0 0 1 5-5" fill="none" stroke="#80d090" stroke-width="1.500"/><rect x="57" y="3" width="11" height="11" fill="#a8e0c0"/><path d="M57 3.500h12M59 3v11" stroke="#5080d0" stroke-width=".9"/><rect x="66" y="1.300" width="3.200" height="3.200" fill="#e03048"/><rect x="62" y="6.500" width="3.200" height="3.200" fill="#e03048"/><path d="M63.500 8l4-5" stroke="#e03048" stroke-width=".8"/></svg>
<div class="a" style="left:0;top:575px;width:1024px;height:1px;background:#2a2e3a"></div>
<div class="a" id="lb"></div>
</body></html>
